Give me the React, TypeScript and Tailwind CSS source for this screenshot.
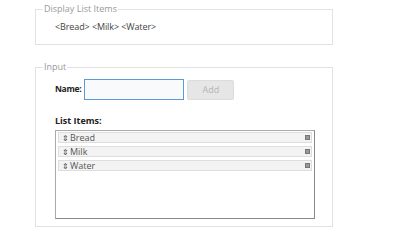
import React from 'react';

const items = ['Bread', 'Milk', 'Water'];

export default function App() {
  return (
    <div className="w-[400px] h-[243px] bg-white pt-[3px] pl-[35px] font-['Open_Sans',sans-serif] text-[9px] text-[#333]">
      {/* Display */}
      <fieldset className="w-[298px] h-[42px] border border-[#e2e2e2] px-[7px] m-0">
        <legend className="px-[1px] text-[#999] leading-[12px]">Display List Items</legend>
        <div className="pl-[12px] pt-[5px] text-[#444] tracking-[-0.1px]">
          {items.map((i) => `<${i}>`).join(' ')}
        </div>
      </fieldset>

      {/* Input */}
      <fieldset className="w-[298px] h-[166px] mt-[16px] border border-[#e2e2e2] px-[7px] m-0">
        <legend className="px-[1px] text-[#999] leading-[12px]">Input</legend>
        <div className="flex items-center pl-[12px] mt-[6px]">
          <span className="font-bold text-[#222] mr-[3px] text-[8.5px] tracking-[-0.3px]">Name:</span>
          <input className="w-[100px] h-[21px] border border-[#5b9bd5] bg-[#f9fafb] outline-none" />
          <button className="ml-[3px] w-[47px] h-[20px] rounded-[2px] bg-[#e6e6e6] border border-[#dcdcdc] text-[#b5b5b5]">
            Add
          </button>
        </div>
        <div className="pl-[12px] mt-[15px] font-bold text-[#222] leading-[12px]">List Items:</div>
        <div className="ml-[12px] mt-[3px] w-[260px] h-[89px] border border-[#aaa] border-r-[#888] border-b-[#888] pt-[1px] px-[2px] flex flex-col gap-[3px]">
          {items.map((i) => (
            <div key={i} className="h-[11px] flex items-center bg-[#f3f3f3] border border-[#dedede] pl-[3px] pr-[1px]">
              <span className="text-[8px] text-[#444] w-[8px] leading-none">⇕</span>
              <span className="text-[#555] flex-1">{i}</span>
              <span className="w-[5px] h-[5px] bg-[#999] border border-[#777]" />
            </div>
          ))}
        </div>
      </fieldset>
    </div>
  );
}
